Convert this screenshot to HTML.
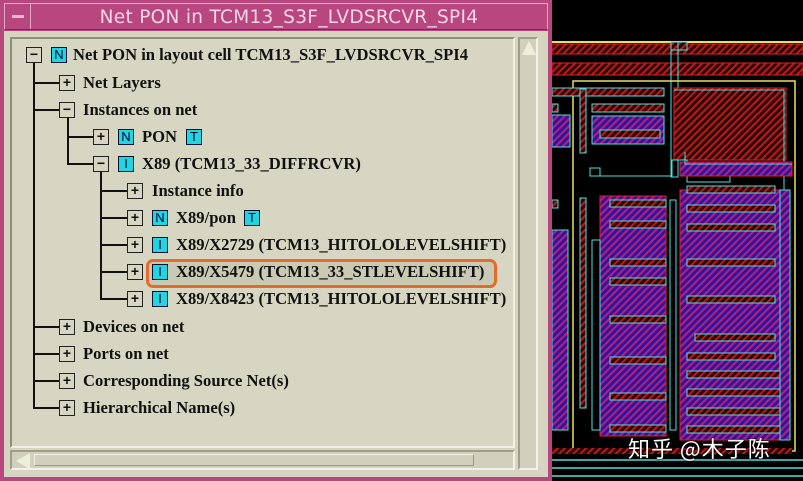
<!DOCTYPE html>
<html><head><meta charset="utf-8"><style>
*{margin:0;padding:0;box-sizing:border-box}
body{width:803px;height:481px;overflow:hidden;background:#000;position:relative;font-family:"Liberation Serif",serif}
#win{position:absolute;left:0;top:0;width:552px;height:481px;background:#b8477f;}
#title{position:absolute;left:4px;top:3px;width:544px;height:27px;background:#b8477f;border:1px solid #e3a9c6;border-bottom-color:#7a2650;}
#title .t{position:absolute;left:26px;right:0;top:3px;text-align:center;color:#f4d6e6;font:18.5px "DejaVu Sans","Liberation Sans",sans-serif;letter-spacing:0.3px}
#title .m{position:absolute;left:0;top:0;width:26px;height:25px;border-right:1px solid #e3a9c6}
#title .m:after{content:"";position:absolute;left:7px;top:11px;width:12px;height:3px;background:#e8b8d0}
#body{position:absolute;left:4px;top:31px;width:544px;height:446px;background:#d5d5c1;}
#panel{position:absolute;left:10px;top:37px;width:505px;height:411px;border:2px solid #8e8e7a;border-right-color:#f0f0e4;border-bottom-color:#f0f0e4;background:#d6d6c2}
#vs{position:absolute;left:518px;top:37px;width:20px;height:433px;border:2px solid #9e9e8a;border-right-color:#f2f2e8;border-bottom-color:#f2f2e8;background:#d0d0bc}
#hs{position:absolute;left:10px;top:450px;width:505px;height:20px;border:2px solid #9e9e8a;border-right-color:#f2f2e8;border-bottom-color:#f2f2e8;background:#d0d0bc}
.row{position:absolute;font-weight:bold;font-size:16.6px;color:#111;white-space:nowrap;line-height:18px}
.bx{position:absolute;width:16px;height:16px;border:1px solid #222;background:#d6d6c2;font:bold 14px "Liberation Sans",sans-serif;line-height:13px;text-align:center;color:#111}
.ic{position:absolute;width:16px;height:16px;background:#20d6e0;border:1.5px solid #113;font:13px "Liberation Sans",sans-serif;line-height:13px;text-align:center;color:#003}
.ln{position:absolute;background:#111}
#hl{position:absolute;left:146px;top:259px;width:351px;height:29px;border:3px solid #e46a2e;border-radius:7px;background:#c9c9b4}
#wm{position:absolute;left:628px;top:432px;color:#fff;font:22px "Noto Sans CJK SC",sans-serif;letter-spacing:1px;text-shadow:0 0 2px #000}
</style></head><body>
<svg style="position:absolute;left:552px;top:0" width="251" height="481">
<defs>
<pattern id="r" width="5" height="5" patternUnits="userSpaceOnUse" patternTransform="rotate(45)"><rect width="5" height="5" fill="#2a0606"/><rect width="2" height="5" fill="#c01818"/></pattern>
<pattern id="m" width="5" height="5" patternUnits="userSpaceOnUse" patternTransform="rotate(45)"><rect width="5" height="5" fill="#2a14a0"/><rect width="2.2" height="5" fill="#b0207a"/></pattern>
</defs>
<rect x="0" y="41" width="251" height="2" fill="#e8e060"/>
<rect x="0" y="44" width="251" height="10" fill="url(#r)" stroke="#e02020"/>
<rect x="0" y="63" width="251" height="12" fill="url(#r)" stroke="#e02020"/>
<rect x="119" y="42" width="16" height="8" fill="url(#r)" stroke="#4ee0e0"/>
<rect x="119" y="42" width="7" height="135" fill="none" stroke="#4ee0e0"/>
<rect x="21" y="81" width="222" height="370" fill="none" stroke="#e8e060" stroke-width="1.5"/>
<rect x="0" y="88" width="112" height="8" fill="url(#r)" stroke="#4ee0e0"/>
<rect x="28" y="89" width="6" height="64" fill="url(#r)" stroke="#4ee0e0"/>
<rect x="122" y="88" width="112" height="72" fill="url(#r)" stroke="#e02020"/>
<path d="M122 90H232V300" fill="none" stroke="#4ee0e0"/>
<rect x="40" y="104" width="72" height="8" fill="url(#r)" stroke="#4ee0e0"/>
<rect x="40" y="116" width="72" height="28" fill="url(#m)" stroke="#4ee0e0"/>
<rect x="48" y="130" width="60" height="8" fill="url(#r)" stroke="#4ee0e0"/>
<rect x="0" y="115" width="18" height="32" fill="url(#m)" stroke="#4ee0e0"/>
<rect x="0" y="104" width="6" height="8" fill="url(#r)" stroke="#4ee0e0"/>
<rect x="38" y="168" width="10" height="8" fill="none" stroke="#4ee0e0"/>
<path d="M38 176H120V160H135V182H178V175" fill="none" stroke="#4ee0e0"/>
<rect x="128" y="162" width="112" height="14" fill="url(#m)" stroke="#e02020"/>
<path d="M133 152V164H240" fill="none" stroke="#4ee0e0"/>
<g>
<rect x="0" y="200" width="6" height="8" fill="url(#r)" stroke="#4ee0e0"/>
<rect x="28" y="198" width="6" height="210" fill="url(#r)" stroke="#4ee0e0"/>
<rect x="0" y="230" width="16" height="200" fill="url(#m)" stroke="#4ee0e0"/>
<rect x="48" y="196" width="66" height="240" fill="url(#m)" stroke="#e02020"/>
<rect x="40" y="240" width="8" height="190" fill="none" stroke="#4ee0e0"/>
<rect x="128" y="190" width="100" height="250" fill="url(#m)" stroke="#e02020"/>
<rect x="118" y="200" width="6" height="230" fill="none" stroke="#4ee0e0"/>
<rect x="228" y="190" width="10" height="250" fill="url(#m)" stroke="#4ee0e0"/>
</g>
<g fill="url(#r)" stroke="#4ee0e0">
<rect x="58" y="200" width="56" height="7"/><rect x="58" y="221" width="56" height="7"/>
<rect x="58" y="259" width="56" height="7"/><rect x="58" y="278" width="56" height="7"/>
<rect x="58" y="316" width="56" height="7"/><rect x="58" y="357" width="56" height="7"/>
<rect x="58" y="393" width="56" height="7"/><rect x="58" y="425" width="56" height="7"/>
<rect x="135" y="186" width="88" height="7"/><rect x="135" y="205" width="88" height="7"/>
<rect x="135" y="224" width="88" height="7"/><rect x="135" y="259" width="88" height="7"/>
<rect x="135" y="296" width="88" height="7"/><rect x="143" y="334" width="80" height="7"/>
<rect x="135" y="353" width="88" height="7"/><rect x="135" y="371" width="93" height="7"/>
<rect x="135" y="389" width="93" height="7"/><rect x="135" y="408" width="93" height="7"/>
<rect x="135" y="426" width="93" height="7"/>
</g>
<rect x="0" y="448" width="240" height="6" fill="url(#r)"/>
<g stroke="#4ee0e0" stroke-width="1.5"><line x1="0" y1="460" x2="251" y2="460"/><line x1="0" y1="468" x2="251" y2="468"/><line x1="0" y1="476" x2="251" y2="476"/></g>
</svg>
<div id="wm">知乎 @木子陈</div>
<div id="win">
<div id="title"><div class="m"></div><div class="t">Net PON in TCM13_S3F_LVDSRCVR_SPI4</div></div>
<div id="body"></div>
<div id="panel"></div>
<div id="vs"><div style="position:absolute;left:2px;top:2px;width:0;height:0;border-left:7px solid transparent;border-right:7px solid transparent;border-bottom:14px solid #eeeedd"></div></div>
<div id="hs"><div style="position:absolute;left:4px;top:1px;width:0;height:0;border-top:8px solid transparent;border-bottom:8px solid transparent;border-right:14px solid #eeeedd"></div><div style="position:absolute;left:22px;top:2px;width:440px;height:12px;border:1px solid #f0f0e4;border-right-color:#999;border-bottom-color:#999"></div></div>
<div id="hl"></div>
<div class="ln" style="left:33px;top:62px;width:2px;height:347px"></div>
<div class="ln" style="left:33px;top:82px;width:26px;height:2px"></div>
<div class="ln" style="left:33px;top:109px;width:26px;height:2px"></div>
<div class="ln" style="left:33px;top:326px;width:26px;height:2px"></div>
<div class="ln" style="left:33px;top:353px;width:26px;height:2px"></div>
<div class="ln" style="left:33px;top:380px;width:26px;height:2px"></div>
<div class="ln" style="left:33px;top:407px;width:26px;height:2px"></div>
<div class="ln" style="left:67px;top:117px;width:2px;height:48px"></div>
<div class="ln" style="left:67px;top:136px;width:26px;height:2px"></div>
<div class="ln" style="left:67px;top:163px;width:26px;height:2px"></div>
<div class="ln" style="left:100px;top:171px;width:2px;height:129px"></div>
<div class="ln" style="left:100px;top:190px;width:27px;height:2px"></div>
<div class="ln" style="left:100px;top:217px;width:27px;height:2px"></div>
<div class="ln" style="left:100px;top:244px;width:27px;height:2px"></div>
<div class="ln" style="left:100px;top:271px;width:27px;height:2px"></div>
<div class="ln" style="left:100px;top:298px;width:27px;height:2px"></div>
<div class="bx" style="left:26px;top:47px">−</div><div class="ic" style="left:51px;top:47px">N</div>
<div class="row" style="left:73px;top:46px">Net PON in layout cell TCM13_S3F_LVDSRCVR_SPI4</div>
<div class="bx" style="left:59px;top:75px">+</div><div class="row" style="left:83px;top:74px">Net Layers</div>
<div class="bx" style="left:59px;top:102px">−</div><div class="row" style="left:83px;top:101px">Instances on net</div>
<div class="bx" style="left:93px;top:129px">+</div><div class="ic" style="left:118px;top:129px">N</div><div class="row" style="left:142px;top:128px">PON</div><div class="ic" style="left:186px;top:129px">T</div>
<div class="bx" style="left:93px;top:156px">−</div><div class="ic" style="left:118px;top:156px">I</div><div class="row" style="left:142px;top:155px">X89 (TCM13_33_DIFFRCVR)</div>
<div class="bx" style="left:127px;top:183px">+</div><div class="row" style="left:152px;top:182px">Instance info</div>
<div class="bx" style="left:127px;top:210px">+</div><div class="ic" style="left:152px;top:210px">N</div><div class="row" style="left:176px;top:209px">X89/pon</div><div class="ic" style="left:244px;top:210px">T</div>
<div class="bx" style="left:127px;top:237px">+</div><div class="ic" style="left:152px;top:237px">I</div><div class="row" style="left:176px;top:236px">X89/X2729 (TCM13_HITOLOLEVELSHIFT)</div>
<div class="bx" style="left:127px;top:264px">+</div><div class="ic" style="left:152px;top:264px">I</div><div class="row" style="left:176px;top:263px">X89/X5479 (TCM13_33_STLEVELSHIFT)</div>
<div class="bx" style="left:127px;top:291px">+</div><div class="ic" style="left:152px;top:291px">I</div><div class="row" style="left:176px;top:290px">X89/X8423 (TCM13_HITOLOLEVELSHIFT)</div>
<div class="bx" style="left:59px;top:319px">+</div><div class="row" style="left:83px;top:318px">Devices on net</div>
<div class="bx" style="left:59px;top:346px">+</div><div class="row" style="left:83px;top:345px">Ports on net</div>
<div class="bx" style="left:59px;top:373px">+</div><div class="row" style="left:83px;top:372px">Corresponding Source Net(s)</div>
<div class="bx" style="left:59px;top:400px">+</div><div class="row" style="left:83px;top:399px">Hierarchical Name(s)</div>
</div>
</body></html>
